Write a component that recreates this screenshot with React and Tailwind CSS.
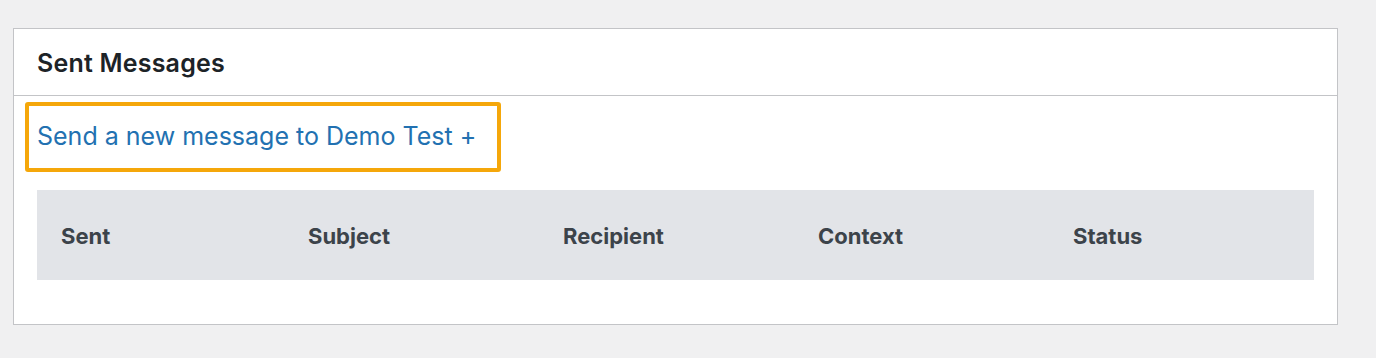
import React from "react";

const columns = [
  { label: "Sent", width: "w-[247px]" },
  { label: "Subject", width: "w-[255px]" },
  { label: "Recipient", width: "w-[255px]" },
  { label: "Context", width: "w-[255px]" },
  { label: "Status", width: "" },
];

const App = () => {
  return (
    <div className="min-h-[358px] bg-[#f0f0f1] pt-[28px] pl-[13px] pr-[38px] font-['Inter',sans-serif]">
      <div className="bg-white border border-[#c3c4c7]">
        <div className="h-[67px] flex items-center px-[23px] pt-[3px] border-b border-[#c3c4c7]">
          <h2 className="text-[25px] font-semibold tracking-[0.2px] text-[#1d2327]">Sent Messages</h2>
        </div>
        <div className="px-[23px] pb-[44px]">
          <div className="ml-[-12px] mt-[6px] w-[476px] h-[70px] border-[4px] border-[#f5a70a] rounded-[3px] flex items-center pl-[8px]">
            <a href="#" className="text-[25px] text-[#2271b1]">
              Send a new message to Demo Test +
            </a>
          </div>
          <table className="mt-[18px] w-full table-fixed bg-[#e2e4e8]">
            <thead>
              <tr className="h-[90px]">
                {columns.map((col) => (
                  <th
                    key={col.label}
                    className={`${col.width} text-left pl-[24px] pt-[3px] text-[22px] font-bold text-[#3c434a]`}
                  >
                    {col.label}
                  </th>
                ))}
              </tr>
            </thead>
          </table>
        </div>
      </div>
    </div>
  );
};

export default App;
